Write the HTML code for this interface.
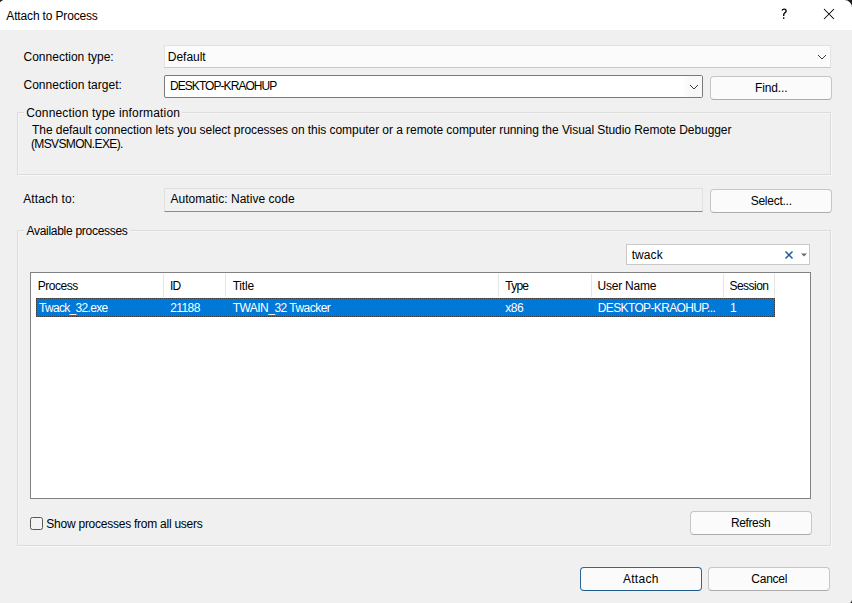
<!DOCTYPE html>
<html><head><meta charset="utf-8">
<style>
*{box-sizing:border-box;margin:0;padding:0}
html,body{width:852px;height:603px;overflow:hidden;background:#f0f0f0}
body{position:relative;font-family:"Liberation Sans",sans-serif;font-size:12px;color:#000}
.a{position:absolute;white-space:pre;line-height:14px}
.b{position:absolute}
.btn{position:absolute;background:#fbfbfb;border:1px solid #c6c6c6;border-bottom-color:#acacac;border-radius:4px}
.grp{position:absolute;border:1px solid #dcdcdc;box-shadow:1px 1px 0 #f8f8f8,inset 1px 1px 0 #f6f6f6}
.hsep{position:absolute;top:274px;width:1px;height:23px;background:#e5e5e5}
</style></head><body>
<div class="b" style="left:0;top:0;width:852px;height:30px;background:#fff"></div>
<svg class="b" style="left:776px;top:4px" width="20" height="20" viewBox="776 4 20 20"><path d="M782 10.4C782.4 9.5 783.2 9.1 784.1 9.1C785.4 9.1 786.1 9.9 786.1 10.9C786.1 12.6 783.7 13 783.7 14.8V15.9" fill="none" stroke="#000" stroke-width="1.35"/><circle cx="783.7" cy="18.1" r="0.85" fill="#000"/></svg>
<svg class="b" style="left:823px;top:8px" width="12" height="12" viewBox="0 0 12 12"><path d="M1 1L11 11M11 1L1 11" stroke="#000" stroke-width="1.05"/></svg>

<div class="b" style="left:164px;top:45px;width:667px;height:23px;background:#fbfbfb;border:1px solid #e3e3e3;border-bottom-color:#c8c8c8"></div>
<svg class="b" style="left:817px;top:53px" width="10" height="7" viewBox="0 0 10 7"><path d="M1 2L5 6L9 2" fill="none" stroke="#3c3c3c" stroke-width="1"/></svg>

<div class="b" style="left:164px;top:75px;width:539px;height:23px;background:#fff;border:1px solid #7a7a7a;border-radius:2px"></div>
<div class="b" style="left:681px;top:76px;width:21px;height:21px;background:linear-gradient(to right,#fff,#f8f8f8 45%)"></div>
<svg class="b" style="left:689px;top:83px" width="10" height="7" viewBox="0 0 10 7"><path d="M1 2L5 6L9 2" fill="none" stroke="#3c3c3c" stroke-width="1"/></svg>
<div class="btn" style="left:710px;top:76px;width:122px;height:24px"></div>

<div class="grp" style="left:17px;top:112px;width:814px;height:63px"></div>
<div class="b" style="left:24px;top:108px;width:158px;height:8px;background:#f0f0f0"></div>

<div class="b" style="left:164px;top:188px;width:539px;height:24px;background:#f1f1f1;border:1px solid #e0e0e0;border-bottom-color:#8a8a8a"></div>
<div class="btn" style="left:710px;top:189px;width:122px;height:24px"></div>

<div class="grp" style="left:17px;top:230px;width:814px;height:316px"></div>
<div class="b" style="left:24px;top:226px;width:106px;height:8px;background:#f0f0f0"></div>

<div class="b" style="left:626px;top:244px;width:184px;height:21px;background:#fff;border:1px solid #c9c9c9"></div>
<svg class="b" style="left:784px;top:250px" width="10" height="10" viewBox="0 0 10 10"><path d="M1.5 1.5L8.5 8.5M8.5 1.5L1.5 8.5" stroke="#1b5c9e" stroke-width="1.45"/></svg>
<svg class="b" style="left:800px;top:252px" width="8" height="5" viewBox="0 0 8 5"><path d="M1 1.5H7L4 4.5Z" fill="#6a6a6a"/></svg>

<div class="b" style="left:30px;top:272px;width:781px;height:227px;background:#fff;border:1px solid #828282"></div>
<div class="hsep" style="left:163px"></div>
<div class="hsep" style="left:225px"></div>
<div class="hsep" style="left:498px"></div>
<div class="hsep" style="left:591px"></div>
<div class="hsep" style="left:723px"></div>
<div class="hsep" style="left:774px"></div>
<div class="b" style="left:36px;top:298px;width:739px;height:19px;background:#0078d7;outline:1px dotted #3a3a3a;outline-offset:-1px"></div>

<div class="b" style="left:30px;top:517px;width:13px;height:13px;border:1px solid #575757;border-radius:2.5px;background:#f3f3f3"></div>
<div class="btn" style="left:690px;top:511px;width:122px;height:24px"></div>

<div class="btn" style="left:580px;top:567px;width:122px;height:24px;border:1px solid #2a679b;border-bottom-color:#1f5a8c"></div>
<div class="btn" style="left:708px;top:567px;width:122px;height:24px"></div>

<div class="a" style="left:6.34px;top:9px;letter-spacing:-0.157px">Attach to Process</div>
<div class="a" style="left:23.49px;top:50px;letter-spacing:0.01px">Connection type:</div>
<div class="a" style="left:167.83px;top:50px;letter-spacing:-0.029px">Default</div>
<div class="a" style="left:23.49px;top:78px;letter-spacing:0.019px">Connection target:</div>
<div class="a" style="left:170.02px;top:79px;letter-spacing:-0.942px">DESKTOP-KRAOHUP</div>
<div class="a" style="left:755.02px;top:81px;letter-spacing:-0.145px">Find...</div>
<div class="a" style="left:26.15px;top:106px;letter-spacing:0.168px">Connection type information</div>
<div class="a" style="left:32.0px;top:123px;letter-spacing:-0.058px">The default connection lets you select processes on this computer or a remote computer running the Visual Studio Remote Debugger</div>
<div class="a" style="left:31.02px;top:137px;letter-spacing:-0.643px">(MSVSMON.EXE).</div>
<div class="a" style="left:23.15px;top:192px;letter-spacing:0.151px">Attach to:</div>
<div class="a" style="left:170.49px;top:192px;letter-spacing:0.04px">Automatic: Native code</div>
<div class="a" style="left:750.68px;top:194px;letter-spacing:-0.253px">Select...</div>
<div class="a" style="left:26.51px;top:224px;letter-spacing:-0.288px">Available processes</div>
<div class="a" style="left:631.66px;top:248px;letter-spacing:0.085px">twack</div>
<div class="a" style="left:37.68px;top:279px;letter-spacing:-0.447px">Process</div>
<div class="a" style="left:170.02px;top:279px;letter-spacing:-0.83px">ID</div>
<div class="a" style="left:232.66px;top:279px;letter-spacing:-0.208px">Title</div>
<div class="a" style="left:505.32px;top:279px;letter-spacing:-0.774px">Type</div>
<div class="a" style="left:597.51px;top:279px;letter-spacing:-0.232px">User Name</div>
<div class="a" style="left:729.51px;top:279px;letter-spacing:-0.532px">Session</div>
<div class="a" style="left:39.0px;top:301px;letter-spacing:-0.684px;color:#fff">Twack_32.exe</div>
<div class="a" style="left:170.32px;top:301px;letter-spacing:-0.622px;color:#fff">21188</div>
<div class="a" style="left:232.66px;top:301px;letter-spacing:-0.522px;color:#fff">TWAIN_32 Twacker</div>
<div class="a" style="left:505.32px;top:301px;letter-spacing:-0.49px;color:#fff">x86</div>
<div class="a" style="left:597.83px;top:301px;letter-spacing:-0.647px;color:#fff">DESKTOP-KRAOHUP...</div>
<div class="a" style="left:730.0px;top:301px;color:#fff">1</div>
<div class="a" style="left:46.36px;top:517px;letter-spacing:-0.251px">Show processes from all users</div>
<div class="a" style="left:731.02px;top:516px;letter-spacing:-0.393px">Refresh</div>
<div class="a" style="left:622.98px;top:572px;letter-spacing:0.268px">Attach</div>
<div class="a" style="left:751.32px;top:572px;letter-spacing:-0.26px">Cancel</div>
<svg class="b" style="left:0;top:0" width="852" height="603" viewBox="0 0 852 603"><path d="M844.5 0H852V7.5A7.5 7.5 0 0 0 844.5 0Z" fill="#1c1c1c"/><path d="M0 0H3.2A8 8 0 0 0 0 2.2Z" fill="#1c1c1c"/><path d="M852 599.8V603H850.2A4.5 4.5 0 0 0 852 599.8Z" fill="#1c1c1c"/></svg>
</body></html>
